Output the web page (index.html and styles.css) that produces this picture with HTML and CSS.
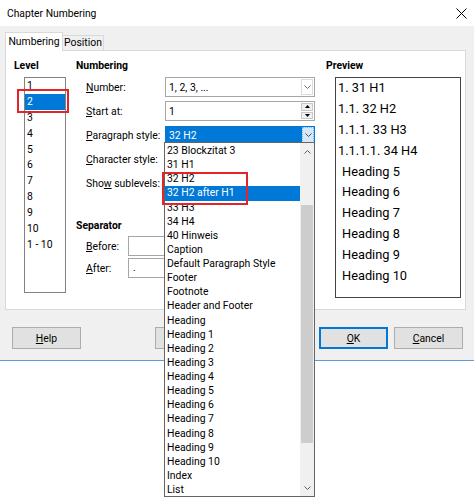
FILE: index.html
```html
<!DOCTYPE html>
<html>
<head lang="en">
    <title>Chapter Numbering</title>
    <link rel="stylesheet" href="styles.css">
</head>
<body>
    <div class="window">
        <div class="titlebar">
            <span class="title">Chapter Numbering</span>
            <svg class="close" width="11" height="11" viewBox="0 0 11 11">
                <path d="M0.5 0.5 L10.5 10.5 M10.5 0.5 L0.5 10.5" stroke="#000" stroke-width="1" fill="none"/>
            </svg>
        </div>
        <div class="dialog">
            <div class="tabs">
                <div class="tab active">Numbering</div>
                <div class="tab">Position</div>
            </div>
            <div class="panel">
                <div class="col-level">
                    <div class="heading">Level</div>
                    <div class="levels">
                        <div class="lvl">1</div>
                        <div class="lvl selected">2</div>
                        <div class="lvl">3</div>
                        <div class="lvl">4</div>
                        <div class="lvl">5</div>
                        <div class="lvl">6</div>
                        <div class="lvl">7</div>
                        <div class="lvl">8</div>
                        <div class="lvl">9</div>
                        <div class="lvl">10</div>
                        <div class="lvl">1 - 10</div>
                    </div>
                </div>
                <div class="col-numbering">
                    <div class="heading">Numbering</div>
                    <div class="form">
                        <div class="row">
                            <label><u>N</u>umber:</label>
                            <div class="combo">
                                <span class="value">1, 2, 3, ...</span>
                                <span class="drop">
                                    <svg width="7" height="4" viewBox="0 0 7 4"><path d="M0.5 0.5 L3.5 3.5 L6.5 0.5" stroke="#707070" fill="none"/></svg>
                                </span>
                            </div>
                        </div>
                        <div class="row">
                            <label><u>S</u>tart at:</label>
                            <div class="combo">
                                <span class="value">1</span>
                                <span class="spin">
                                    <span class="spin-btn"><svg width="5" height="3" viewBox="0 0 5 3"><path d="M0 3 L2.5 0 L5 3 Z" fill="#000"/></svg></span>
                                    <span class="spin-btn"><svg width="5" height="3" viewBox="0 0 5 3"><path d="M0 0 L2.5 3 L5 0 Z" fill="#000"/></svg></span>
                                </span>
                            </div>
                        </div>
                        <div class="row">
                            <label><u>P</u>aragraph style:</label>
                            <div class="combo focused">
                                <span class="value">32 H2</span>
                                <span class="drop">
                                    <svg width="7" height="4" viewBox="0 0 7 4"><path d="M0.5 0.5 L3.5 3.5 L6.5 0.5" stroke="#505050" fill="none"/></svg>
                                </span>
                            </div>
                        </div>
                        <div class="row">
                            <label><u>C</u>haracter style:</label>
                            <div class="combo"></div>
                        </div>
                        <div class="row">
                            <label>Sho<u>w</u> sublevels:</label>
                            <div class="combo short"></div>
                        </div>
                    </div>
                    <div class="heading sep">Separator</div>
                    <div class="form">
                        <div class="row tight">
                            <label class="narrow"><u>B</u>efore:</label>
                            <div class="field"></div>
                        </div>
                        <div class="row tight">
                            <label class="narrow"><u>A</u>fter:</label>
                            <div class="field">.</div>
                        </div>
                    </div>
                </div>
                <div class="col-preview">
                    <div class="heading">Preview</div>
                    <div class="preview">
                        <div class="pv">1. 31 H1</div>
                        <div class="pv">1.1. 32 H2</div>
                        <div class="pv">1.1.1. 33 H3</div>
                        <div class="pv">1.1.1.1. 34 H4</div>
                        <div class="pv indent">Heading 5</div>
                        <div class="pv indent">Heading 6</div>
                        <div class="pv indent">Heading 7</div>
                        <div class="pv indent">Heading 8</div>
                        <div class="pv indent">Heading 9</div>
                        <div class="pv indent">Heading 10</div>
                    </div>
                </div>
            </div>
            <div class="buttons">
                <button class="btn help"><u>H</u>elp</button>
                <button class="btn options"></button>
                <span class="spacer"></span>
                <button class="btn default"><u>O</u>K</button>
                <button class="btn cancel"><u>C</u>ancel</button>
            </div>
        </div>
    </div>

    <div class="dropdown">
        <div class="items">
            <div class="item">23 Blockzitat 3</div>
            <div class="item">31 H1</div>
            <div class="item">32 H2</div>
            <div class="item active">32 H2 after H1</div>
            <div class="item">33 H3</div>
            <div class="item">34 H4</div>
            <div class="item">40 Hinweis</div>
            <div class="item">Caption</div>
            <div class="item">Default Paragraph Style</div>
            <div class="item">Footer</div>
            <div class="item">Footnote</div>
            <div class="item">Header and Footer</div>
            <div class="item">Heading</div>
            <div class="item">Heading 1</div>
            <div class="item">Heading 2</div>
            <div class="item">Heading 3</div>
            <div class="item">Heading 4</div>
            <div class="item">Heading 5</div>
            <div class="item">Heading 6</div>
            <div class="item">Heading 7</div>
            <div class="item">Heading 8</div>
            <div class="item">Heading 9</div>
            <div class="item">Heading 10</div>
            <div class="item">Index</div>
            <div class="item">List</div>
        </div>
        <div class="scrollbar">
            <div class="arrow">
                <svg width="7" height="4" viewBox="0 0 7 4"><path d="M0.5 3.5 L3.5 0.5 L6.5 3.5" stroke="#606060" fill="none"/></svg>
            </div>
            <div class="track-top"></div>
            <div class="thumb"></div>
            <div class="track-bottom"></div>
            <div class="arrow">
                <svg width="7" height="4" viewBox="0 0 7 4"><path d="M0.5 0.5 L3.5 3.5 L6.5 0.5" stroke="#606060" fill="none"/></svg>
            </div>
        </div>
    </div>

    <div class="mark mark-level"></div>
    <div class="mark mark-style"></div>
</body>
</html>
```

FILE: styles.css
```css
body {
    margin: 0;
    background: #fff;
    font-family: Roboto, "Liberation Sans", sans-serif;
    font-size: 10.4px;
    color: #000;
}

.window {
    width: 474px;
    background: #f0f0f0;
    border-bottom: 1px solid #5b9bd9;
    box-shadow: 0 3px 10px rgba(0, 0, 0, 0.22);
}

.titlebar {
    height: 26px;
    background: #fff;
    display: flex;
    align-items: center;
    justify-content: space-between;
    padding: 0 7px;
}

.title {
    font-size: 10.3px;
}

.dialog {
    padding: 7px 8px 11px 5px;
}

.tabs {
    display: flex;
    align-items: flex-end;
    height: 17px;
}

.tab {
    width: 40px;
    height: 14px;
    line-height: 14px;
    text-align: center;
    border: 1px solid #d9d9d9;
    border-bottom: none;
    border-left: none;
    background: #f0f0f0;
}

.tab.active {
    width: 56px;
    height: 18px;
    line-height: 17px;
    border-left: 1px solid #d9d9d9;
    background: #fff;
    margin-bottom: -1px;
    position: relative;
    z-index: 1;
}

.panel {
    height: 251px;
    background: #fff;
    border: 1px solid #d9d9d9;
    display: flex;
    padding: 7px 0 0 8px;
    box-sizing: content-box;
}

.heading {
    font-weight: bold;
    line-height: 16px;
    margin-bottom: 3px;
}

.col-level {
    width: 62px;
}

.levels {
    margin-left: 10px;
    width: 42px;
    height: 216px;
    box-sizing: border-box;
    border: 1px solid #828282;
}

.lvl {
    height: 15.9px;
    line-height: 15.9px;
    padding-left: 2px;
}

.lvl.selected {
    background: #0078d7;
    color: #fff;
}

.col-numbering {
    width: 250px;
}

.form {
    margin-left: 10px;
    display: flex;
    flex-direction: column;
    gap: 4px;
}

.row {
    display: flex;
    align-items: center;
    height: 20px;
}

label {
    width: 79px;
    white-space: nowrap;
}

label.narrow {
    width: 42px;
}

.combo {
    width: 150px;
    height: 20px;
    box-sizing: border-box;
    border: 1px solid #a6a6a6;
    display: flex;
    align-items: center;
    background: #fff;
}

.combo.short {
    width: 60px;
}

.combo .value {
    flex: 1;
    padding-left: 3px;
}

.combo .drop {
    width: 12px;
    height: 16px;
    margin-right: 1px;
    box-sizing: border-box;
    border: 1px solid #dcdcdc;
    display: flex;
    align-items: center;
    justify-content: center;
}

.combo.focused {
    height: 18px;
    border-color: #0078d7;
    background: #0078d7;
    color: #fff;
}

.combo.focused .drop {
    height: 16px;
    background: #d6e8f8;
    border: 1px dotted #7eb4ea;
    margin-right: 0;
}

.spin {
    width: 12px;
    height: 16px;
    margin-right: 1px;
    display: flex;
    flex-direction: column;
    gap: 1px;
}

.spin-btn {
    flex: 1;
    border: 1px solid #c8c8c8;
    background: #f0f0f0;
    display: flex;
    align-items: center;
    justify-content: center;
}

.sep {
    margin-top: 25px;
    margin-bottom: 2px;
}

.row.tight + .row.tight {
    margin-top: -2px;
}

.field {
    width: 120px;
    height: 20px;
    box-sizing: border-box;
    border: 1px solid #a6a6a6;
    background: #fff;
    padding-left: 4px;
    line-height: 17px;
}

.preview {
    margin-left: 9px;
    width: 126px;
    height: 221px;
    box-sizing: border-box;
    border: 1px solid #444;
    padding-left: 2px;
    font-size: 12.8px;
}

.pv {
    height: 20.9px;
    line-height: 20px;
}

.pv.indent {
    padding-left: 4px;
}

.buttons {
    display: flex;
    margin-top: 17px;
    margin-left: 7px;
    margin-right: 3px;
}

.btn {
    width: 69px;
    height: 22px;
    padding: 0;
    border: 1px solid #adadad;
    background: #e1e1e1;
    font-family: inherit;
    font-size: 10.4px;
    color: #000;
}

.btn.options {
    margin-left: 74px;
}

.spacer {
    flex: 1;
}

.btn.default {
    border-color: #0078d7;
    box-shadow: inset 0 0 0 1px #0078d7;
    margin-right: 6px;
}

.dropdown {
    position: absolute;
    left: 164px;
    top: 142px;
    width: 151px;
    height: 355px;
    box-sizing: border-box;
    border: 1px solid #646464;
    background: #fff;
    display: flex;
}

.items {
    flex: 1;
    padding-top: 1px;
}

.item {
    height: 14.125px;
    line-height: 14px;
    padding-left: 2px;
    white-space: nowrap;
    overflow: hidden;
}

.item.active {
    background: #0078d7;
    color: #fff;
}

.scrollbar {
    width: 14px;
    background: #f0f0f0;
    display: flex;
    flex-direction: column;
}

.arrow {
    height: 17px;
    display: flex;
    align-items: center;
    justify-content: center;
}

.track-top {
    height: 45px;
}

.thumb {
    height: 238px;
    margin: 0 1px;
    background: #cdcdcd;
}

.track-bottom {
    flex: 1;
}

.mark {
    position: absolute;
    border: 2px solid #e3242b;
    box-sizing: border-box;
}

.mark-level {
    left: 17px;
    top: 89px;
    width: 52px;
    height: 24px;
}

.mark-style {
    left: 162px;
    top: 172px;
    width: 86px;
    height: 33px;
}
```
